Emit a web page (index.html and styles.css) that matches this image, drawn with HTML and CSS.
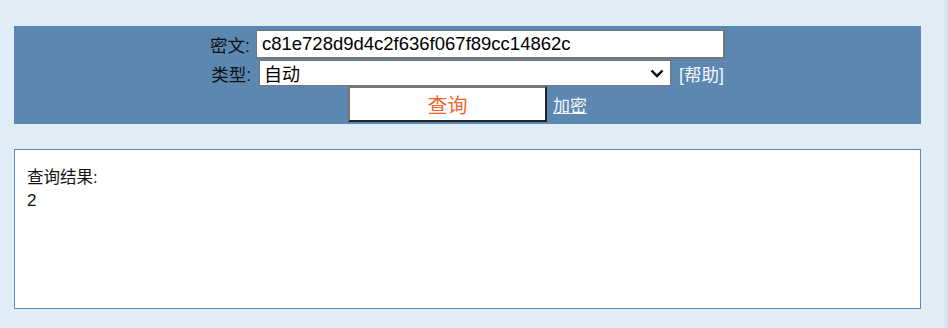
FILE: index.html
```html
<!DOCTYPE html>
<html lang="zh">
<head>
<meta charset="utf-8">
<title>查询</title>
<link rel="stylesheet" href="styles.css">
</head>
<body>
<div class="page">
  <form class="query-bar">
    <div class="row row-cipher">
      <label class="label">密文:</label>
      <input class="cipher" type="text" value="c81e728d9d4c2f636f067f89cc14862c">
    </div>
    <div class="row row-type">
      <label class="label">类型:</label>
      <div class="select">
        <span class="select-text">自动</span>
        <svg class="chev" width="14" height="9" viewBox="0 0 14 9"><path d="M1.5 1.5 L7 7 L12.5 1.5" fill="none" stroke="#000" stroke-width="2.4"/></svg>
      </div>
      <a class="help" href="#">[帮助]</a>
    </div>
    <div class="row row-actions">
      <button class="submit" type="button">查询</button>
      <a class="encrypt" href="#">加密</a>
    </div>
  </form>
  <div class="result">
    <div class="result-title">查询结果:</div>
    <div class="result-value">2</div>
  </div>
</div>
</body>
</html>
```
FILE: styles.css
```css
html, body {
  margin: 0;
  padding: 0;
}
body {
  width: 948px;
  height: 328px;
  overflow: hidden;
  background: linear-gradient(to right, #e1edf6 0, #e1edf6 942px, #d3e2ee 948px);
  font-family: "Liberation Sans", "Noto Sans CJK SC", sans-serif;
  color: #111;
}
.page {
  padding: 26px 0 0 14px;
  width: 907px;
}
.query-bar {
  background: #5b87b1;
  height: 98px;
  box-sizing: border-box;
  padding-top: 4px;
  display: flex;
  flex-direction: column;
  margin: 0;
}
.row {
  display: flex;
  justify-content: center;
  align-items: center;
}
.label {
  font-size: 17.5px;
  color: #111;
}
.row-cipher .label {
  margin-right: 6px;
}
.cipher {
  width: 469px;
  height: 29px;
  box-sizing: border-box;
  margin: 0;
  border-style: solid;
  border-color: #767676;
  border-width: 1px 2px 2px 1px;
  padding: 0 0 0 5px;
  font-family: "Liberation Sans", "Noto Sans CJK SC", sans-serif;
  font-size: 18.5px;
  color: #000;
  background: #fff;
  outline: none;
}
.row-type {
  margin-top: 1px;
}
.row-type .label {
  margin-right: 8px;
}
.select {
  width: 412px;
  height: 26px;
  box-sizing: border-box;
  border: 1px solid #767676;
  background: #fff;
  display: flex;
  align-items: center;
  justify-content: space-between;
  padding: 0 6px 0 4px;
}
.select-text {
  font-size: 18px;
  color: #000;
}
.help {
  margin-left: 8px;
  font-size: 17.5px;
  color: #f4f8ff;
  text-decoration: none;
}
.submit {
  width: 199px;
  height: 36px;
  box-sizing: border-box;
  margin: 0;
  background: #fff;
  border-style: solid;
  border-width: 2px;
  border-color: #767676 #222 #222 #767676;
  color: #f2652a;
  font-family: "Liberation Sans", "Noto Sans CJK SC", sans-serif;
  font-size: 20px;
  padding: 0;
}
.encrypt {
  margin-left: 6px;
  font-size: 17px;
  color: #f4f8ff;
  text-decoration: underline;
}
.result {
  margin-top: 25px;
  height: 160px;
  box-sizing: border-box;
  background: #fff;
  border: 1px solid #5a8ac0;
  padding: 15px 12px 13px;
  font-size: 16.5px;
  line-height: 24px;
  color: #111;
}
.result-value {
  font-size: 17px;
}
```
